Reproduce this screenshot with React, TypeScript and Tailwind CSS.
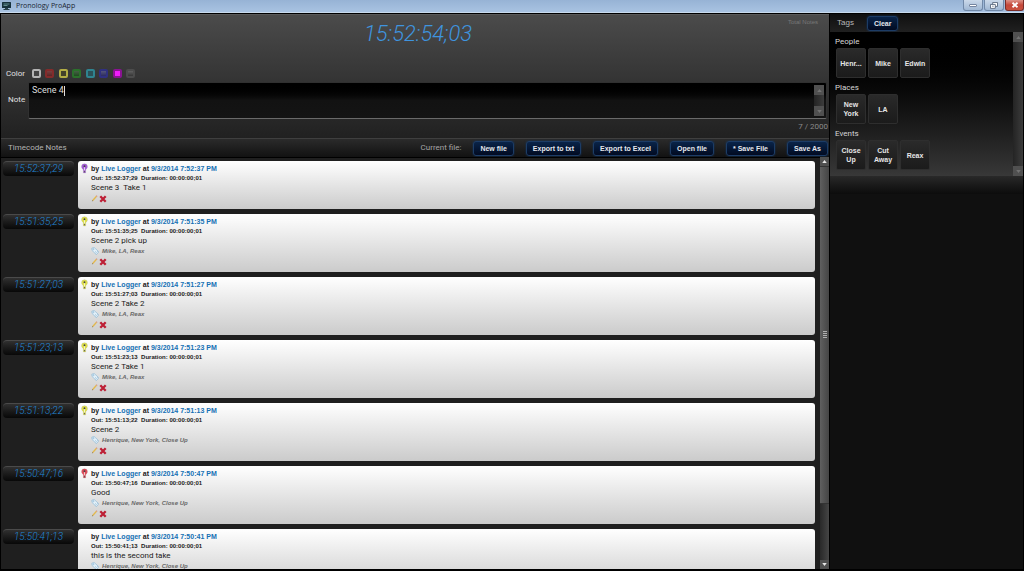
import { clsx } from "clsx";

type Note = {
  timecode: string;
  date: string;
  text: string;
  tags?: string;
  pin?: string;
};

const notes: Note[] = [
  { timecode: "15:52:37;29", date: "9/3/2014 7:52:37 PM", text: "Scene 3  Take 1", pin: "#a45cd6" },
  { timecode: "15:51:35;25", date: "9/3/2014 7:51:35 PM", text: "Scene 2 pick up", tags: "Mike, LA, Reax", pin: "#dfe04a" },
  { timecode: "15:51:27;03", date: "9/3/2014 7:51:27 PM", text: "Scene 2 Take 2", tags: "Mike, LA, Reax", pin: "#dfe04a" },
  { timecode: "15:51:23;13", date: "9/3/2014 7:51:23 PM", text: "Scene 2 Take 1", tags: "Mike, LA, Reax", pin: "#dfe04a" },
  { timecode: "15:51:13;22", date: "9/3/2014 7:51:13 PM", text: "Scene 2", tags: "Henrique, New York, Close Up", pin: "#dfe04a" },
  { timecode: "15:50:47;16", date: "9/3/2014 7:50:47 PM", text: "Good", tags: "Henrique, New York, Close Up", pin: "#e04c5a" },
  { timecode: "15:50:41;13", date: "9/3/2014 7:50:41 PM", text: "this is the second take", tags: "Henrique, New York, Close Up" },
];

const colors = [
  { name: "White", style: "border-[#b4b4b4] bg-[#444444]" },
  { name: "Red", style: "border-[#842b2b] bg-linear-to-b from-[#7a4040] to-[#5c2626]" },
  { name: "Yellow", style: "border-[#b3ad45] bg-[#43422a]" },
  { name: "Green", style: "border-[#2b702b] bg-linear-to-b from-[#456145] to-[#204a20]" },
  { name: "Cyan", style: "border-[#2f8490] bg-[#2c5158]" },
  { name: "Blue", style: "border-[#303080] bg-linear-to-b from-[#55557a] to-[#2c2c60]" },
  { name: "Magenta", style: "border-[#8a1292] bg-[#f01cfa]" },
  { name: "Gray", style: "border-[#4c4c4c] bg-linear-to-b from-[#606060] to-[#363636]" },
];

const fileActions = ["New file", "Export to txt", "Export to Excel", "Open file", "* Save File", "Save As"];

const tagGroups = [
  { title: "People", tags: ["Henr...", "Mike", "Edwin"] },
  { title: "Places", tags: ["New York", "LA"] },
  { title: "Events", tags: ["Close Up", "Cut Away", "Reax"] },
];

function BlueButton({ label }: { label: string }) {
  return (
    <button className="h-[15px] shrink-0 rounded-[3px] border border-[#1c3c66] bg-linear-to-b from-[#0a2449] to-[#020b22] px-[6px] text-[7px] leading-[13px] font-bold whitespace-nowrap text-[#e4e8ee] shadow-[0_0_2px_#123563]">
      {label}
    </button>
  );
}

function Arrow({ down, className }: { down?: boolean; className?: string }) {
  return (
    <svg viewBox="0 0 6 4" className={clsx("h-[3px] w-[5px]", className)} fill="currentColor">
      <path d={down ? "M0 0h6L3 4z" : "M0 4h6L3 0z"} />
    </svg>
  );
}

function DimScrollbar({ className }: { className: string }) {
  return (
    <div className={clsx("flex flex-col justify-between bg-linear-to-r from-[#242424] to-[#3c3c3c] text-[#727272]", className)}>
      <button aria-label="Scroll up" className="flex h-[10px] w-full items-center justify-center bg-[#505050]">
        <Arrow />
      </button>
      <button aria-label="Scroll down" className="flex h-[10px] w-full items-center justify-center bg-[#505050]">
        <Arrow down />
      </button>
    </div>
  );
}

function PinIcon({ color }: { color: string }) {
  return (
    <svg viewBox="0 0 8 12" className="h-[11px] w-[7px]">
      <path d="M4 .5a3.400 3.400 0 0 0-3.400 3.400C.6 5.600 2 6.300 2.700 7.500V11h2.600V7.500C6 6.300 7.400 5.600 7.400 3.900A3.400 3.400 0 0 0 4 .5z" fill={color} stroke="#88888888" strokeWidth=".4" />
      <circle cx="4" cy="3.400" r="1.100" fill="#444" />
      <path d="M4 4.500v3.500" stroke="#fff" strokeWidth=".8" />
      <circle cx="4" cy="9.600" r=".8" fill="#555" />
    </svg>
  );
}

function TagIcon() {
  return (
    <svg viewBox="0 0 10 10" className="h-[8px] w-[8px]" fill="#e3f0f8" stroke="#86b4d3" strokeWidth=".8">
      <path d="M1 1.500l3-.8 4.800 4.300-3 3.600L1.300 4.300z" />
      <circle cx="3" cy="2.800" r=".7" />
      <path d="M5 5.500l1.500 1.200M8.800 5l.4 2-2.600 2.500-.8-.9" />
    </svg>
  );
}

function PencilIcon() {
  return (
    <svg viewBox="0 0 8 8" className="h-[7px] w-[7px]">
      <path d="M1.700 6.500l4.600-5" stroke="#e3b84b" strokeWidth="1.500" />
      <path d="M1 7.300l.5-1.400.8.8z" fill="#555" />
      <path d="M6.200 1.600l.7-.8" stroke="#d98a80" strokeWidth="1.600" />
    </svg>
  );
}

function DeleteIcon() {
  return (
    <svg viewBox="0 0 8 8" className="h-[8px] w-[8px]">
      <path d="M1.300 1.300l5.400 5.400M6.700 1.300L1.300 6.700" stroke="#bd1f35" strokeWidth="2.300" />
    </svg>
  );
}

function TitleBar() {
  return (
    <header className="flex h-[13px] shrink-0 items-start justify-between border-b border-[#c9dbee] bg-linear-to-b from-[#97b3d5] to-[#a9c3e2] pl-[2px]">
      <div className="flex h-[12px] items-center gap-[5px]">
        <svg viewBox="0 0 18 16" className="h-[8px] w-[9px]">
          <rect x="0" y="0" width="18" height="12" rx="1" fill="#16313c" />
          <path d="M3 4h12M3 7h8" stroke="#79a9ab" strokeWidth="1.500" />
          <path d="M6 12h6v2h3v2H3v-2h3z" fill="#28404a" />
        </svg>
        <h1 className="font-['Open_Sans',sans-serif] text-[7px] leading-[12px] text-[#1a2633]">Pronology ProApp</h1>
      </div>
      <div className="flex h-[11px] gap-px">
        <button aria-label="Minimize" className="flex w-[20px] items-center justify-center rounded-b-[3px] border border-t-0 border-[#7189a8] bg-linear-to-b from-[#cbd9ea] to-[#a0b8d4]">
          <span className="h-[3px] w-[8px] rounded-[1px] border border-[#7585a0] bg-white" />
        </button>
        <button aria-label="Restore" className="flex w-[20px] items-center justify-center rounded-b-[3px] border border-t-0 border-[#7189a8] bg-linear-to-b from-[#cbd9ea] to-[#a0b8d4]">
          <svg viewBox="0 0 9 8" className="h-[7px] w-[8px]" fill="#fff" stroke="#56657a">
            <path d="M3 .5h5.500v4.500H3z" />
            <path d="M.5 2.800h5.500v4.500H.5zM2.500 4.800h1.500" />
          </svg>
        </button>
        <button aria-label="Close" className="flex w-[19px] items-center justify-center rounded-b-[3px] border border-t-0 border-[#7a2c27] bg-linear-to-b from-[#dd9288] via-[#c4473a] to-[#c9523f]">
          <svg viewBox="0 0 8 6" className="h-[6px] w-[8px]">
            <path d="M1.500.8l5 4.400M6.500.8l-5 4.400" stroke="#fff" strokeWidth="1.800" />
          </svg>
        </button>
      </div>
    </header>
  );
}

function NoteEditor() {
  return (
    <section className="shrink-0 border-t border-[#5a5a5a] bg-linear-to-b from-[#4b4b4b] to-[#212121]">
      <div className="grid h-[53px] grid-cols-[1fr_auto_1fr]">
        <time className="col-start-2 pt-[7px] pl-[6px] font-['Roboto',sans-serif] text-[22px] leading-[24px] font-light text-[#3f94df] italic">
          15:52:54;03
        </time>
        <span className="justify-self-end pt-[3px] pr-[11px] text-[6px] leading-[8px] text-[#787878]">Total Notes</span>
      </div>

      <fieldset className="flex h-[14px] items-center pb-[3px] pl-[5px]">
        <span className="w-[26px] font-['Roboto',sans-serif] text-[8px] leading-[10px] text-[#e0e0e0]">Color</span>
        <div className="flex w-[103px] justify-between">
          {colors.map((color) => (
            <button key={color.name} aria-label={color.name} className={clsx("size-[9px] rounded-[2px] border-2", color.style)} />
          ))}
        </div>
      </fieldset>

      <div className="flex items-center pr-[2px] pl-[7px]">
        <label htmlFor="note" className="w-[20px] pb-[2px] font-['Roboto',sans-serif] text-[8px] leading-[10px] text-[#e0e0e0]">
          Note
        </label>
        <div className="relative flex h-[37px] flex-1 rounded-[2px] border border-[#303030] border-b-[#6a6a6a] bg-linear-to-b from-black via-[#121212] to-[#141414]">
          <textarea
            id="note"
            defaultValue="Scene 4"
            className="flex-1 resize-none overflow-hidden px-[3px] pt-[2px] font-['Roboto',sans-serif] text-[9px] leading-[11px] text-[#dedede] outline-none"
          />
          <span className="absolute top-[3px] left-[35px] h-[10px] w-px bg-[#e0e0e0]" />
          <DimScrollbar className="my-[2px] mr-[2px] w-[10px]" />
        </div>
      </div>
      <p className="pt-[3px] pr-px pb-[6px] text-right font-['Roboto',sans-serif] text-[8px] leading-[10px] text-[#8a8a8a]">7 / 2000</p>
    </section>
  );
}

function NoteRow({ note }: { note: Note }) {
  return (
    <li className="flex items-start gap-[4px]">
      <time className="h-[15px] w-[71px] shrink-0 rounded-[4px] border-t border-[#4a4a4a] bg-linear-to-b from-[#303030] to-[#080808] text-center font-['Roboto',sans-serif] text-[10px] leading-[13px] font-light text-[#2288d6] italic">
        {note.timecode}
      </time>
      <article className="flex flex-1 rounded-[3px] bg-linear-to-b from-white to-[#cbcbcb] pt-[2px] pb-[5px] text-[7px] leading-[10px] text-[#1a1a1a]">
        <div className="flex w-[13px] shrink-0 justify-center">{note.pin && <PinIcon color={note.pin} />}</div>
        <div className="pt-px">
          <p className="font-bold">
            by{" "}
            <a href="#user" className="text-[#1470b4]">
              Live Logger
            </a>{" "}
            at{" "}
            <a href="#time" className="text-[#1470b4]">
              {note.date}
            </a>
          </p>
          <p className="text-[6px] leading-[9px] font-bold whitespace-pre">
            Out: {note.timecode}
            {"  "}Duration: 00:00:00;01
          </p>
          <p className="font-['Roboto',sans-serif] text-[8px] leading-[10px] whitespace-pre">{note.text}</p>
          {note.tags && (
            <p className="flex h-[10px] items-center gap-[3px] text-[6px] font-bold text-[#686868] italic">
              <TagIcon />
              {note.tags}
            </p>
          )}
          <div className="flex h-[11px] items-center gap-px">
            <button aria-label="Edit note">
              <PencilIcon />
            </button>
            <button aria-label="Delete note">
              <DeleteIcon />
            </button>
          </div>
        </div>
      </article>
    </li>
  );
}

function NoteScrollbar() {
  return (
    <div className="flex w-[9px] shrink-0 flex-col bg-linear-to-r from-[#292929] to-[#464646] text-[#e8e8e8]">
      <button aria-label="Scroll notes up" className="flex h-[9px] items-center justify-center bg-[#505050]">
        <Arrow />
      </button>
      <div className="flex h-[82%] flex-col items-center justify-center gap-px border-y border-[#333] bg-linear-to-r from-[#606060] to-[#454545]">
        <span className="h-px w-[4px] bg-[#b0b0b0]" />
        <span className="h-px w-[4px] bg-[#b0b0b0]" />
        <span className="h-px w-[4px] bg-[#b0b0b0]" />
        <span className="h-px w-[4px] bg-[#b0b0b0]" />
      </div>
      <button aria-label="Scroll notes down" className="mt-auto flex h-[9px] items-center justify-center bg-[#505050]">
        <Arrow down />
      </button>
    </div>
  );
}

function TagsPanel() {
  return (
    <aside className="flex w-[193px] shrink-0 flex-col bg-[#101010]">
      <div className="flex h-[18px] shrink-0 items-center gap-[13px] bg-linear-to-b from-[#101010] to-[#202020] pl-[7px]">
        <h2 className="text-[8px] leading-[10px] text-[#b8b8b8]">Tags</h2>
        <BlueButton label="Clear" />
      </div>
      <div className="flex bg-linear-to-b from-black to-[#383838]">
        <div className="flex flex-1 flex-col gap-[4px] pt-[4px] pb-[6px] pl-[5px]">
          {tagGroups.map((group) => (
            <section key={group.title}>
              <h3 className="font-['Roboto',sans-serif] text-[8px] leading-[12px] text-[#d6d6d6]">{group.title}</h3>
              <div className="flex gap-[2px] pl-px">
                {group.tags.map((tag) => (
                  <button
                    key={tag}
                    className="size-[30px] rounded-[2px] border border-[#2e2e2e] bg-linear-to-b from-[#2a2a2a] to-[#1b1b1b] px-[2px] text-[7px] leading-[9px] font-bold text-[#e6e6e6]"
                  >
                    {tag}
                  </button>
                ))}
              </div>
            </section>
          ))}
        </div>
        <DimScrollbar className="w-[10px]" />
      </div>
      <div className="h-[18px] bg-linear-to-b from-[#292929] to-[#0c0c0c]" />
    </aside>
  );
}

export default function App() {
  return (
    <div className="flex h-screen flex-col bg-black font-['Liberation_Sans',Arial,sans-serif]">
      <TitleBar />
      <div className="flex min-h-0 flex-1 gap-px border-x border-t border-b-2 border-black">
        <main className="flex min-w-0 flex-1 flex-col bg-[#1f1f1f]">
          <NoteEditor />
          <div className="flex h-[19px] shrink-0 items-center gap-[12px] border-t border-[#3f3f3f] bg-linear-to-b from-[#2b2b2b] to-[#121212] pr-px pl-[7px]">
            <h2 className="mr-auto font-['Roboto',sans-serif] text-[8px] leading-[10px] text-[#b4b4b4]">Timecode Notes</h2>
            <span className="font-['Roboto',sans-serif] text-[8px] leading-[10px] text-[#a6a6a6]">Current file:</span>
            {fileActions.map((action) => (
              <BlueButton key={action} label={action} />
            ))}
          </div>
          <div className="flex min-h-0 flex-1">
            <ul className="flex min-w-0 flex-1 flex-col gap-[5px] overflow-hidden border-t border-black pt-[3px] pr-[5px] pl-[2px]">
              {notes.map((note) => (
                <NoteRow key={note.timecode} note={note} />
              ))}
            </ul>
            <NoteScrollbar />
          </div>
        </main>
        <TagsPanel />
      </div>
    </div>
  );
}
